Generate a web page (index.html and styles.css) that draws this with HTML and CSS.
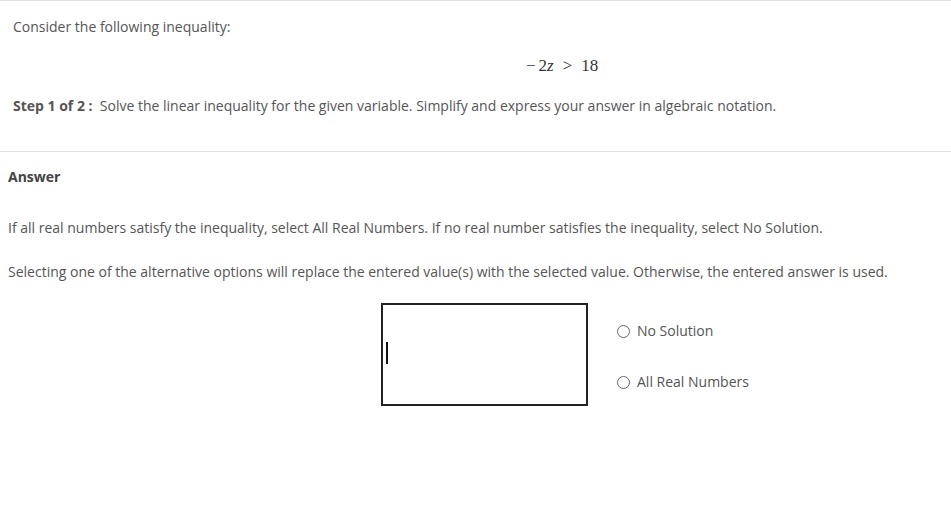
FILE: index.html
```html
<!DOCTYPE html>
<html>
<head>
<meta charset="utf-8">
<link rel="stylesheet" href="styles.css">
</head>
<body>
<div class="question">
  <p class="intro">Consider the following inequality:</p>
  <div class="equation"><span class="minus">&minus;</span>2<i>z</i><span class="gt">&gt;</span>18</div>
  <p class="step"><b>Step 1 of 2 :</b>&nbsp; Solve the linear inequality for the given variable. Simplify and express your answer in algebraic notation.</p>
</div>
<div class="answer">
  <h4 class="answer-title">Answer</h4>
  <p class="note">If all real numbers satisfy the inequality, select All Real Numbers. If no real number satisfies the inequality, select No Solution.</p>
  <p class="note">Selecting one of the alternative options will replace the entered value(s) with the selected value. Otherwise, the entered answer is used.</p>
  <div class="entry">
    <div class="input-box"><span class="caret"></span></div>
    <div class="options">
      <label class="option"><span class="radio"></span>No Solution</label>
      <label class="option"><span class="radio"></span>All Real Numbers</label>
    </div>
  </div>
</div>
</body>
</html>
```
FILE: styles.css
```css
* { box-sizing: border-box; }
html, body { margin: 0; padding: 0; background: #fff; }
body {
  font-family: "Open Sans", "DejaVu Sans", sans-serif;
  font-size: 14px;
  color: #555;
}
.question {
  border-top: 1px solid #e2e2e2;
  border-bottom: 1px solid #e2e2e2;
  padding: 16px 13px 35px 13px;
  margin-top: 0;
}
.intro { margin: 0; line-height: 20px; }
.equation {
  font-family: "Liberation Serif", "Times New Roman", serif;
  font-size: 17px;
  color: #333;
  margin: 19px 0 0 513px;
  line-height: 20px;
}
.equation i { font-style: italic; }
.equation .minus { margin-right: 3px; }
.equation .gt { margin: 0 9px; }
.step { margin: 20px 0 0 0; line-height: 20px; }
.step b { font-weight: 700; color: #555; }
.answer { padding: 15px 8px 0 8px; }
.answer-title {
  margin: 0;
  font-size: 14px;
  font-weight: 700;
  color: #444;
  line-height: 20px;
}
.note { margin: 31px 0 0 0; line-height: 20px; }
.note + .note { margin-top: 24px; }
.entry {
  display: flex;
  margin-top: 21px;
  margin-left: 373px;
}
.input-box {
  width: 207px;
  height: 103px;
  border: 2px solid #222;
  position: relative;
}
.caret {
  position: absolute;
  left: 3px;
  top: 37px;
  width: 2px;
  height: 22px;
  background: #111;
}
.options {
  display: flex;
  flex-direction: column;
  margin-left: 29px;
  padding-top: 18px;
  gap: 31px;
}
.option {
  display: flex;
  align-items: center;
  line-height: 20px;
  color: #555;
}
.radio {
  width: 13px;
  height: 13px;
  border: 1px solid #666;
  border-radius: 50%;
  margin-right: 7px;
  background: #fff;
}
```
